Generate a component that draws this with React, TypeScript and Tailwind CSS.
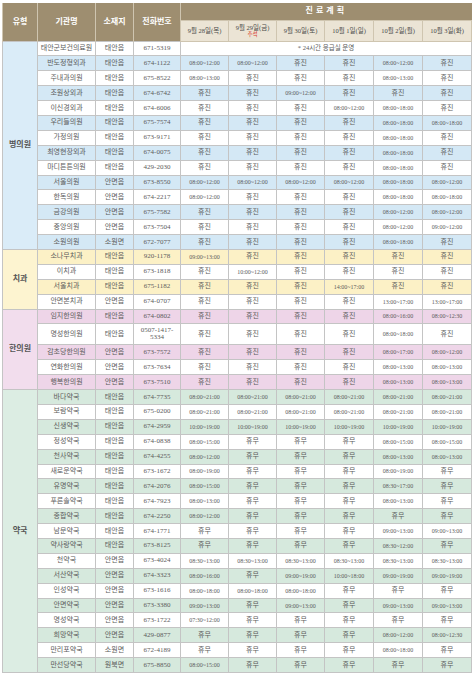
import React from "react";

const J = "휴진";
const M = "휴무";

type Row = { name: string; loc: string; tel: string; times?: string[]; note?: string; tall?: boolean };
type Group = { label: string; side: string; tint: string; tintOdd: boolean; rows: Row[] };

const dates = ["9월 28일(목)", "9월 29일(금)", "9월 30일(토)", "10월 1일(일)", "10월 2일(월)", "10월 3일(화)"];

const groups: Group[] = [
  {
    label: "병의원",
    side: "bg-[#daecf8]",
    tint: "bg-[#d4e8f5]",
    tintOdd: true,
    rows: [
      { name: "태안군보건의료원", loc: "태안읍", tel: "671-5319", note: "* 24시간 응급실 운영" },
      { name: "반도정형외과", loc: "태안읍", tel: "674-1122", times: ["08:00~12:00", "08:00~12:00", J, J, "08:00~12:00", J] },
      { name: "주내과의원", loc: "태안읍", tel: "675-8522", times: ["08:00~13:00", J, J, J, "08:00~13:00", J] },
      { name: "조원상외과", loc: "태안읍", tel: "674-6742", times: [J, J, "09:00~12:00", J, J, J] },
      { name: "이신경외과", loc: "태안읍", tel: "674-6006", times: [J, J, J, "08:00~12:00", "08:00~18:00", J] },
      { name: "우리들의원", loc: "태안읍", tel: "675-7574", times: [J, J, J, J, "08:00~18:00", "08:00~18:00"] },
      { name: "가정의원", loc: "태안읍", tel: "673-9171", times: [J, J, J, J, "08:00~18:00", J] },
      { name: "최영현장외과", loc: "태안읍", tel: "674-0075", times: [J, J, J, J, "08:00~18:00", J] },
      { name: "마디튼튼의원", loc: "태안읍", tel: "429-2030", times: [J, J, J, J, "08:00~18:00", J] },
      { name: "서울의원", loc: "안면읍", tel: "673-8550", times: ["08:00~12:00", "08:00~12:00", "08:00~12:00", "08:00~12:00", "08:00~18:00", "08:00~12:00"] },
      { name: "한독의원", loc: "안면읍", tel: "674-2217", times: ["08:00~12:00", J, J, J, "08:00~18:00", "08:00~18:00"] },
      { name: "금강의원", loc: "안면읍", tel: "675-7582", times: [J, J, J, J, "08:00~12:00", "08:00~12:00"] },
      { name: "중앙의원", loc: "안면읍", tel: "673-7504", times: [J, J, J, J, "08:00~12:00", "09:00~12:00"] },
      { name: "소원의원", loc: "소원면", tel: "672-7077", times: [J, J, J, J, "08:00~18:00", J] },
    ],
  },
  {
    label: "치과",
    side: "bg-[#fdf4d0]",
    tint: "bg-[#fcf1c6]",
    tintOdd: false,
    rows: [
      { name: "소나무치과", loc: "태안읍", tel: "920-1178", times: ["09:00~13:00", J, J, J, J, J] },
      { name: "이치과", loc: "태안읍", tel: "673-1818", times: [J, "10:00~12:00", J, J, J, J] },
      { name: "서울치과", loc: "태안읍", tel: "675-1182", times: [J, J, J, "14:00~17:00", J, J] },
      { name: "안면본치과", loc: "안면읍", tel: "674-0707", times: [J, J, J, J, "13:00~17:00", "13:00~17:00"] },
    ],
  },
  {
    label: "한의원",
    side: "bg-[#f2dded]",
    tint: "bg-[#eed5e8]",
    tintOdd: false,
    rows: [
      { name: "임지한의원", loc: "태안읍", tel: "674-0802", times: [J, J, J, J, "08:00~16:00", "08:00~12:30"] },
      { name: "명성한의원", loc: "태안읍", tel: "0507-1417-5334", tall: true, times: [J, J, J, J, "08:00~18:00", J] },
      { name: "감초당한의원", loc: "안면읍", tel: "673-7572", times: [J, J, J, J, "08:00~17:00", "08:00~12:00"] },
      { name: "연화한의원", loc: "안면읍", tel: "673-7634", times: [J, J, J, J, "08:00~13:00", "08:00~13:00"] },
      { name: "행복한의원", loc: "안면읍", tel: "673-7510", times: [J, J, J, J, "08:00~13:00", "08:00~13:00"] },
    ],
  },
  {
    label: "약국",
    side: "bg-[#dcede3]",
    tint: "bg-[#d6e9dd]",
    tintOdd: false,
    rows: [
      { name: "바다약국", loc: "태안읍", tel: "674-7735", times: Array(6).fill("08:00~21:00") },
      { name: "보람약국", loc: "태안읍", tel: "675-0200", times: Array(6).fill("08:00~21:00") },
      { name: "신생약국", loc: "태안읍", tel: "674-2959", times: Array(6).fill("10:00~19:00") },
      { name: "정성약국", loc: "태안읍", tel: "674-0838", times: ["08:00~15:00", M, M, M, "08:00~15:00", "08:00~15:00"] },
      { name: "천사약국", loc: "태안읍", tel: "674-4255", times: ["08:00~12:00", M, M, M, "08:00~13:00", "08:00~13:00"] },
      { name: "새로운약국", loc: "태안읍", tel: "673-1672", times: ["08:00~19:00", M, M, M, "08:00~19:00", M] },
      { name: "유명약국", loc: "태안읍", tel: "674-2076", times: ["08:00~15:00", M, M, M, "08:30~17:00", M] },
      { name: "푸른솔약국", loc: "태안읍", tel: "674-7923", times: ["08:00~13:00", M, M, M, "08:00~13:00", M] },
      { name: "종합약국", loc: "태안읍", tel: "674-2250", times: ["08:00~12:00", M, M, M, M, M] },
      { name: "남문약국", loc: "태안읍", tel: "674-1771", times: [M, M, M, M, "09:00~13:00", "09:00~13:00"] },
      { name: "약사랑약국", loc: "태안읍", tel: "673-8125", times: [M, M, M, M, "08:30~12:00", M] },
      { name: "천약국", loc: "안면읍", tel: "673-4024", times: Array(6).fill("08:30~13:00") },
      { name: "서산약국", loc: "안면읍", tel: "674-3323", times: ["08:00~16:00", M, "09:00~19:00", "10:00~18:00", "09:00~19:00", "09:00~19:00"] },
      { name: "인성약국", loc: "안면읍", tel: "673-1616", times: ["08:00~18:00", "08:00~18:00", "08:00~18:00", M, M, M] },
      { name: "안면약국", loc: "안면읍", tel: "673-3380", times: ["09:00~13:00", M, "09:00~13:00", M, "09:00~13:00", "09:00~13:00"] },
      { name: "명성약국", loc: "안면읍", tel: "673-1722", times: ["07:30~12:00", M, M, M, M, M] },
      { name: "희망약국", loc: "안면읍", tel: "429-0877", times: [M, M, M, M, "08:00~12:00", "08:00~12:30"] },
      { name: "만리포약국", loc: "소원면", tel: "672-4189", times: [M, M, M, M, "08:00~18:00", M] },
      { name: "만선당약국", loc: "원북면", tel: "675-8850", times: ["08:00~15:00", M, M, M, M, M] },
    ],
  },
];

const cell = "border border-[#c4c4c4] p-0 text-center align-middle leading-none whitespace-nowrap";

export default function App() {
  return (
    <div
      className="w-[474px] h-[677px] bg-white pt-[3px] pl-[2px] overflow-hidden"
      style={{ fontFamily: '"Liberation Serif", "Noto Sans CJK KR", serif' }}
    >
      <table className="table-fixed border-collapse w-[469px] text-[#5c5c5c] text-[7px]">
        <colgroup>
          <col className="w-[35px]" />
          <col className="w-[58px]" />
          <col className="w-[38px]" />
          <col className="w-[47px]" />
          <col className="w-[48px]" />
          <col className="w-[48px]" />
          <col className="w-[48px]" />
          <col className="w-[49px]" />
          <col className="w-[49px]" />
          <col className="w-[49px]" />
        </colgroup>
        <thead>
          <tr className="h-[17px]">
            {["유형", "기관명", "소재지", "전화번호"].map((h) => (
              <th
                key={h}
                rowSpan={2}
                className="bg-[#9e8e70] text-white text-[8px] font-bold border-x border-[#cfc5b0] p-0"
              >
                {h}
              </th>
            ))}
            <th colSpan={6} className="bg-[#9e8e70] text-white text-[8px] font-bold p-0 tracking-[3px]">
              진료계획
            </th>
          </tr>
          <tr className="h-[21px]">
            {dates.map((d, i) => (
              <th
                key={d}
                className="bg-[#ebe4d5] text-[#4a4a4a] text-[6.5px] font-normal border border-[#cfc5b0] p-0 leading-[1.1]"
              >
                {d}
                {i === 1 && <div className="text-[#d9362b] text-[5.5px]">추석</div>}
              </th>
            ))}
          </tr>
        </thead>
        <tbody>
          {groups.map((g) =>
            g.rows.map((r, i) => {
              const tinted = g.tintOdd ? i % 2 === 1 : i % 2 === 0;
              const bg = tinted ? g.tint : "bg-white";
              return (
                <tr key={g.label + r.name} className={r.tall ? "h-[21px]" : "h-[14.9px]"}>
                  {i === 0 && (
                    <td rowSpan={g.rows.length} className={`${cell} ${g.side} text-[8px] font-bold text-[#555]`}>
                      {g.label}
                    </td>
                  )}
                  <td className={`${cell} ${bg}`}>{r.name}</td>
                  <td className={`${cell} ${bg}`}>{r.loc}</td>
                  <td className={`${cell} ${bg} ${r.tall ? "whitespace-normal leading-[1.05] px-[3px]" : ""}`}>
                    {r.tall ? (
                      <>
                        0507-1417-
                        <br />
                        5334
                      </>
                    ) : (
                      r.tel
                    )}
                  </td>
                  {r.note ? (
                    <td colSpan={6} className={`${cell} ${bg} text-[6.5px]`}>
                      {r.note}
                    </td>
                  ) : (
                    r.times!.map((t, k) => (
                      <td key={k} className={`${cell} ${bg} ${t.length > 2 ? "text-[6px]" : ""}`}>
                        {t}
                      </td>
                    ))
                  )}
                </tr>
              );
            })
          )}
        </tbody>
      </table>
    </div>
  );
}
